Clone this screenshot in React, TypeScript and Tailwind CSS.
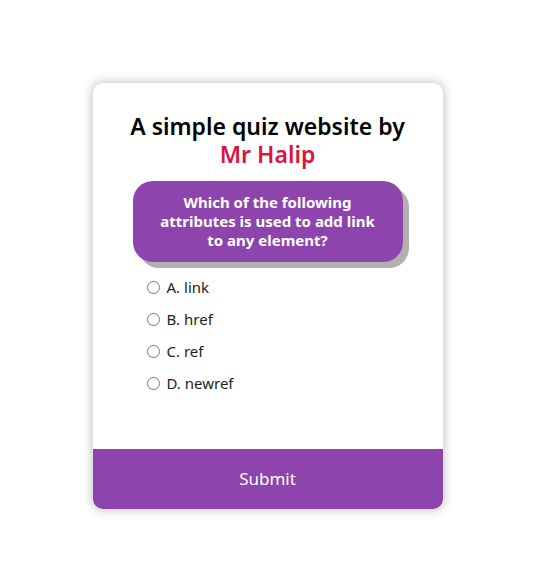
import { useState } from 'react'

const options = [
    { id: 'a', label: 'A. link' },
    { id: 'b', label: 'B. href' },
    { id: 'c', label: 'C. ref' },
    { id: 'd', label: 'D. newref' },
]

export default function App() {
    const [answer, setAnswer] = useState<string | null>(null)

    return (
        <div className="min-h-screen bg-white pt-[83px] font-['Noto_Sans',sans-serif]">
            <div className="mx-auto w-[350px] overflow-hidden rounded-[10px] bg-white shadow-[0_0_10px_2px_rgba(0,0,0,0.2)]">
                <div className="px-4 pt-[29px] pb-[56px]">
                    <h2 className="text-center text-[23px] font-semibold leading-[28px] text-black">
                        A simple quiz website by
                        <span className="block text-[#dc143c]">Mr Halip</span>
                    </h2>
                    <div className="mx-auto mt-[13px] w-[270px] rounded-[20px] bg-[#8e44ad] px-5 py-[12px] text-center text-[15px] font-bold leading-[19px] text-white shadow-[6px_6px_0_#b0b0b0]">
                        Which of the following attributes is used to add link to any element?
                    </div>
                    <ul className="mt-[15px] flex flex-col gap-[12px] pl-[38px]">
                        {options.map((o) => (
                            <li key={o.id} className="flex h-[20px] items-center">
                                <input
                                    type="radio"
                                    name="answer"
                                    id={o.id}
                                    checked={answer === o.id}
                                    onChange={() => setAnswer(o.id)}
                                    className="m-0 h-[13px] w-[13px]"
                                />
                                <label htmlFor={o.id} className="ml-[7px] text-[15px] text-[#222]">
                                    {o.label}
                                </label>
                            </li>
                        ))}
                    </ul>
                </div>
                <button className="block h-[60px] w-full bg-[#8e44ad] text-[17px] text-white">Submit</button>
            </div>
        </div>
    )
}
